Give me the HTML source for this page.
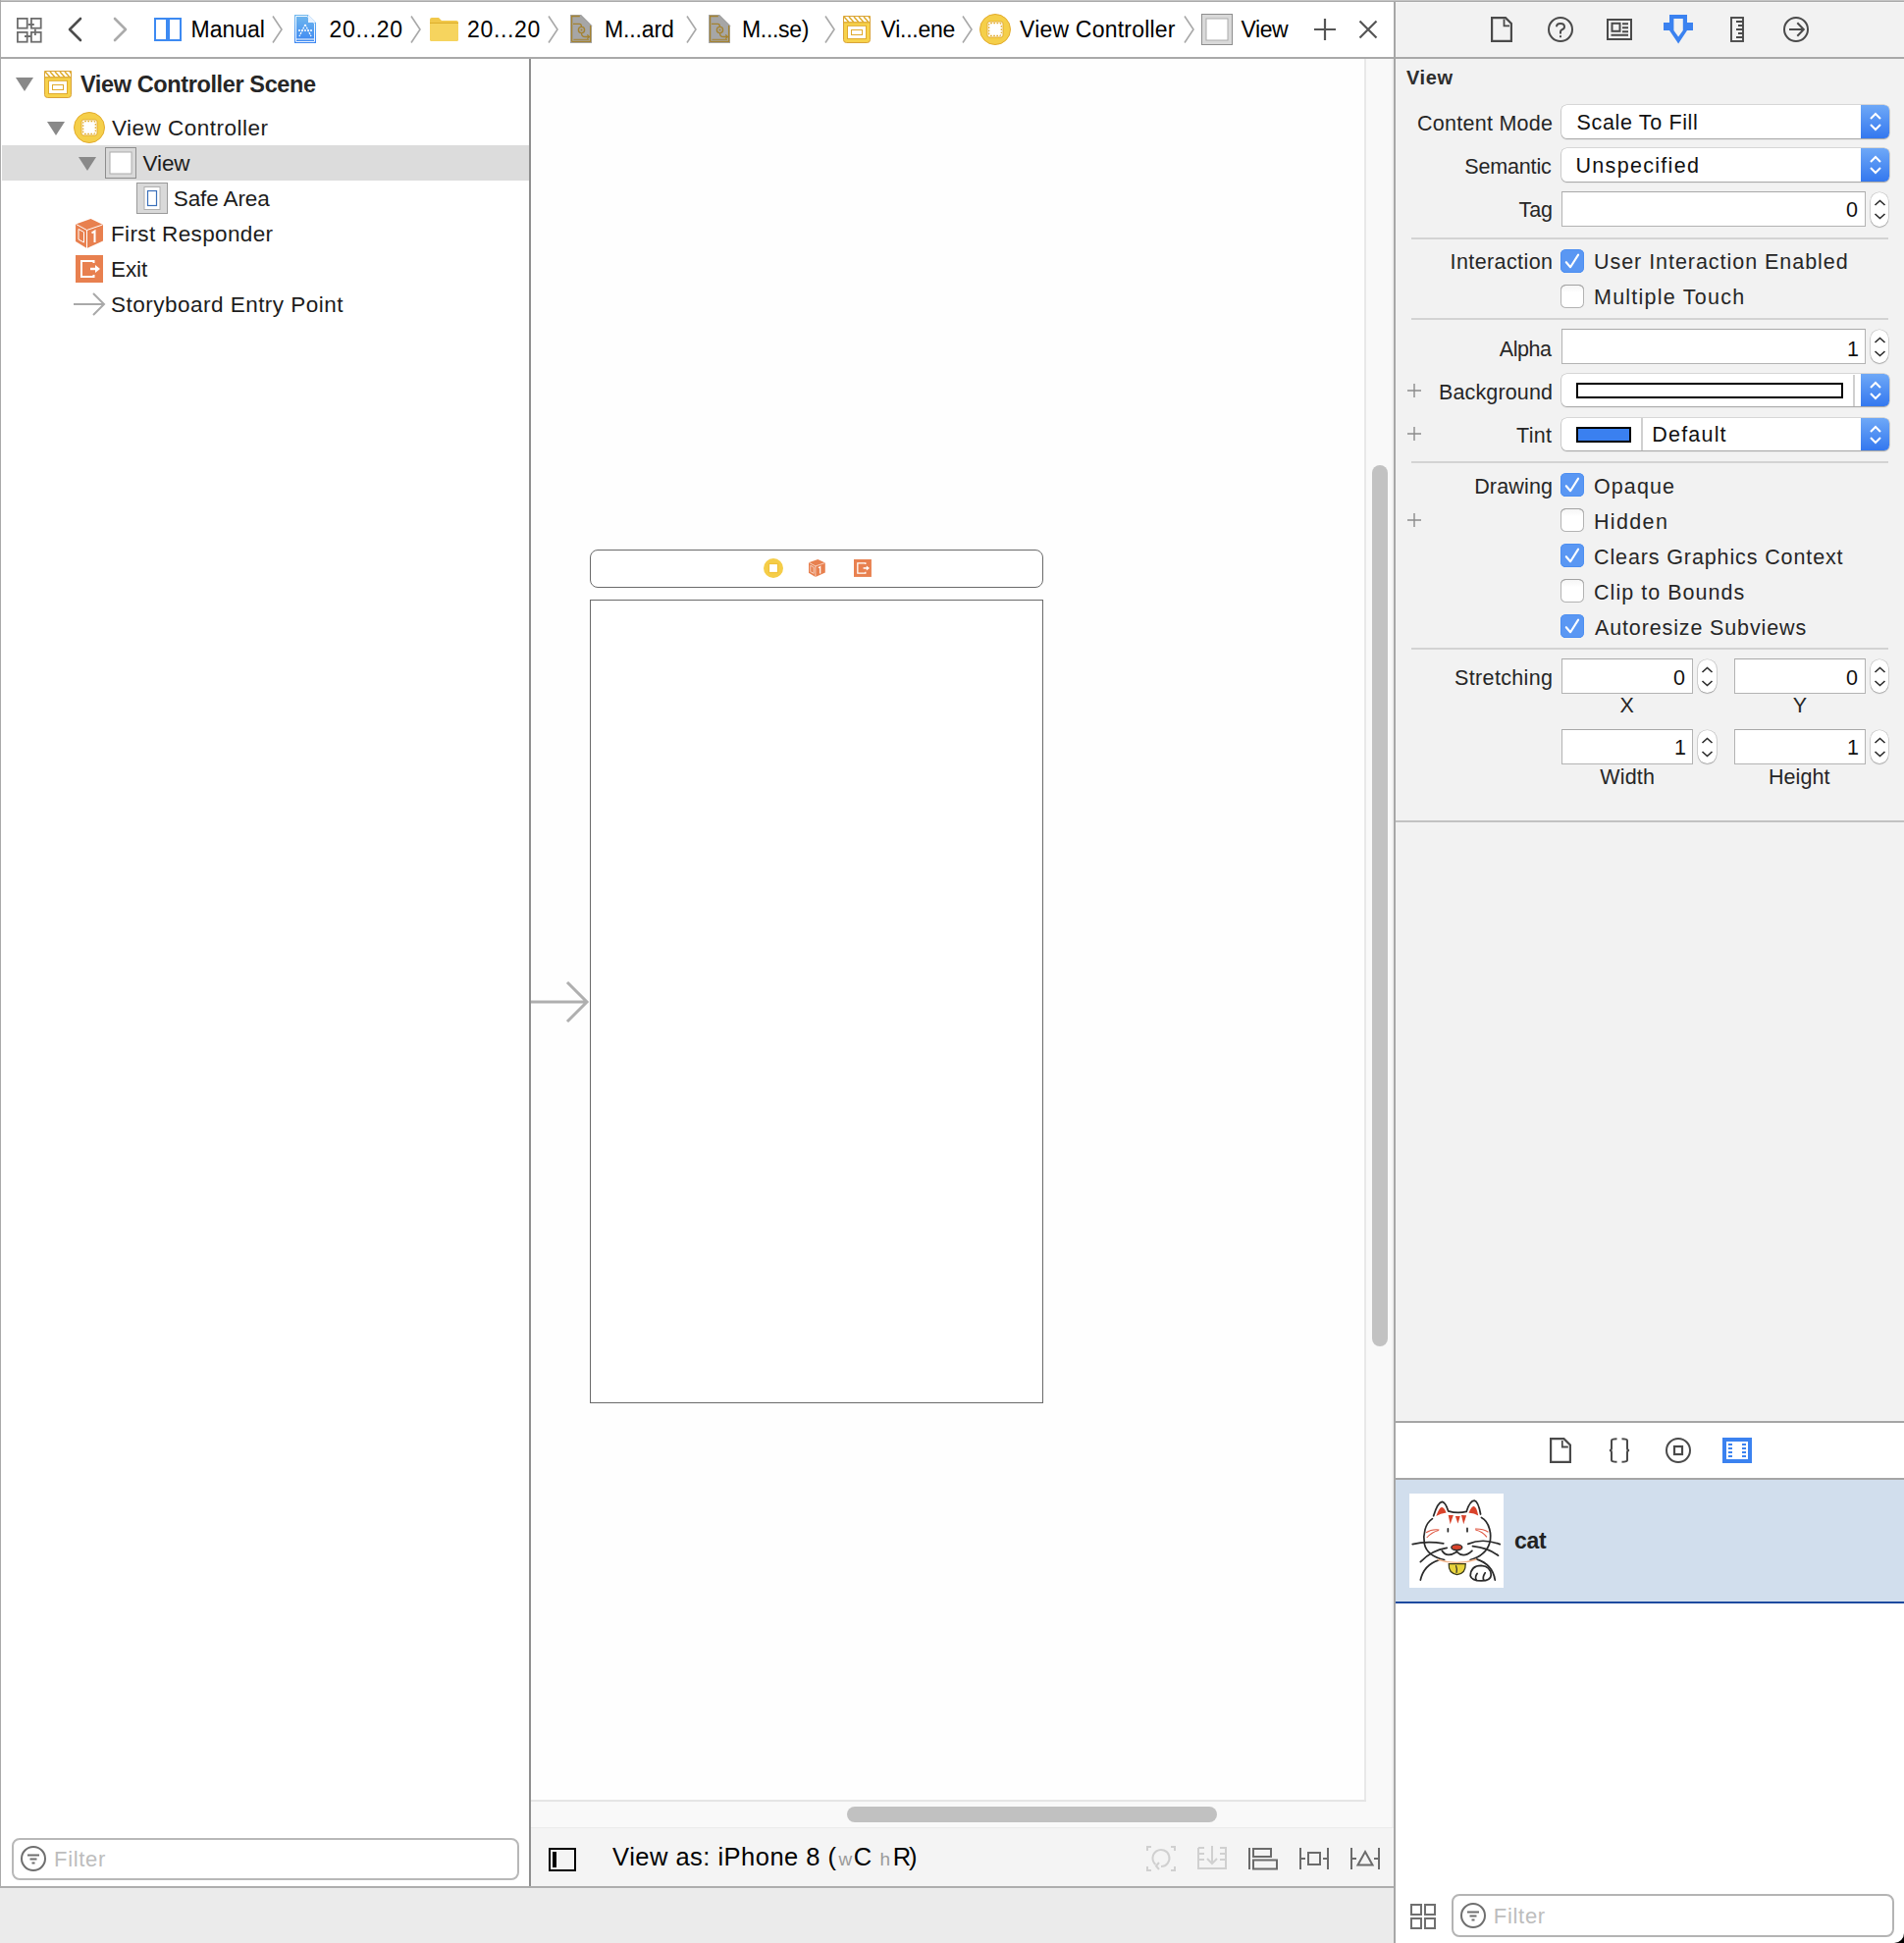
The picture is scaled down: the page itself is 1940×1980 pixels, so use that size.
<!DOCTYPE html>
<html><head><meta charset="utf-8">
<style>
*{box-sizing:border-box;margin:0;padding:0}
html,body{width:1940px;height:1980px;overflow:hidden;background:#ebebeb;font-family:"Liberation Sans",sans-serif;color:#1a1a1a;position:relative}
.a{position:absolute}
.t{position:absolute;white-space:nowrap;line-height:1}
svg{position:absolute;overflow:visible}
</style></head><body>
<div class="a" style="left:0px;top:0px;width:1940px;height:1980px;background:#ebebeb"></div>
<div class="a" style="left:0px;top:0px;width:1420px;height:58px;background:#fff"></div>
<div class="a" style="left:0px;top:60px;width:539px;height:1862px;background:#fff"></div>
<div class="a" style="left:541px;top:60px;width:849px;height:1774px;background:#fefefe"></div>
<div class="a" style="left:1390px;top:60px;width:30px;height:1802px;background:#f9f9f9"></div>
<div class="a" style="left:1390px;top:60px;width:2px;height:1776px;background:#e8e8e8"></div>
<div class="a" style="left:1418px;top:60px;width:1.5px;height:1802px;background:#f0f0f0"></div>
<div class="a" style="left:541px;top:1835px;width:849px;height:27px;background:#f9f9f9"></div>
<div class="a" style="left:541px;top:1834px;width:851px;height:1.5px;background:#e5e5e5"></div>
<div class="a" style="left:541px;top:1862px;width:879px;height:60px;background:#f4f4f4;border-top:1.5px solid #ebebeb"></div>
<div class="a" style="left:1422px;top:0px;width:518px;height:1448px;background:#f2f2f2"></div>
<div class="a" style="left:1422px;top:2px;width:518px;height:1px;background:#f6f6f6"></div>
<div class="a" style="left:1422px;top:1450px;width:518px;height:56px;background:#fff"></div>
<div class="a" style="left:1422px;top:1508px;width:518px;height:472px;background:#fff"></div>
<div class="a" style="left:0px;top:0px;width:1940px;height:1px;background:#c4c4c4"></div>
<div class="a" style="left:0px;top:1px;width:1940px;height:1px;background:#aaaaaa"></div>
<div class="a" style="left:0px;top:58px;width:1940px;height:2px;background:#a9a9a9"></div>
<div class="a" style="left:0px;top:0px;width:1px;height:1924px;background:#aaaaaa"></div>
<div class="a" style="left:539px;top:60px;width:2px;height:1862px;background:#8f8f8f"></div>
<div class="a" style="left:0px;top:1922px;width:1422px;height:2px;background:#adadad"></div>
<div class="a" style="left:1420px;top:2px;width:2px;height:1978px;background:#a7a7a7"></div>
<div class="a" style="left:1422px;top:1448px;width:518px;height:2px;background:#a5a5a5"></div>
<div class="a" style="left:1422px;top:1506px;width:518px;height:2px;background:#a5a5a5"></div>
<svg style="left:17px;top:18px;" width="26" height="26" viewBox="0 0 26 26"><g fill="none" stroke="#6e6e6e" stroke-width="1.8">
<rect x="0.9" y="0.9" width="9.8" height="9.8"/><rect x="14.9" y="0.9" width="9.8" height="9.8"/>
<rect x="0.9" y="14.9" width="9.8" height="9.8"/><rect x="14.9" y="14.9" width="9.8" height="9.8"/>
<path d="M11.6 7H17.8M18.9 11.6V17.9M8 19H14.1"/></g></svg>
<svg style="left:68px;top:17px;" width="18" height="26" viewBox="0 0 18 26"><path d="M14 2L3 13L14 24" fill="none" stroke="#4d4d4d" stroke-width="2.6" stroke-linecap="round" stroke-linejoin="round"/></svg>
<svg style="left:114px;top:17px;" width="18" height="26" viewBox="0 0 18 26"><path d="M3 2L14 13L3 24" fill="none" stroke="#ababab" stroke-width="2.6" stroke-linecap="round" stroke-linejoin="round"/></svg>
<svg style="left:157px;top:18px;" width="28" height="24" viewBox="0 0 28 24"><g fill="none" stroke="#3d8af2" stroke-width="2"><rect x="1" y="1" width="26" height="22"/><path d="M14 1v22" stroke-width="4"/></g></svg>
<svg style="left:277px;top:16px;" width="11" height="28" viewBox="0 0 11 28"><path d="M1 0.5L10 14L1 27.5" fill="none" stroke="#a8a8a8" stroke-width="1.6"/></svg>
<svg style="left:417.5px;top:16px;" width="11" height="28" viewBox="0 0 11 28"><path d="M1 0.5L10 14L1 27.5" fill="none" stroke="#a8a8a8" stroke-width="1.6"/></svg>
<svg style="left:558px;top:16px;" width="11" height="28" viewBox="0 0 11 28"><path d="M1 0.5L10 14L1 27.5" fill="none" stroke="#a8a8a8" stroke-width="1.6"/></svg>
<svg style="left:699px;top:16px;" width="11" height="28" viewBox="0 0 11 28"><path d="M1 0.5L10 14L1 27.5" fill="none" stroke="#a8a8a8" stroke-width="1.6"/></svg>
<svg style="left:839.5px;top:16px;" width="11" height="28" viewBox="0 0 11 28"><path d="M1 0.5L10 14L1 27.5" fill="none" stroke="#a8a8a8" stroke-width="1.6"/></svg>
<svg style="left:980px;top:16px;" width="11" height="28" viewBox="0 0 11 28"><path d="M1 0.5L10 14L1 27.5" fill="none" stroke="#a8a8a8" stroke-width="1.6"/></svg>
<svg style="left:1205.5px;top:16px;" width="11" height="28" viewBox="0 0 11 28"><path d="M1 0.5L10 14L1 27.5" fill="none" stroke="#a8a8a8" stroke-width="1.6"/></svg>
<svg style="left:300px;top:15px;" width="22" height="29" viewBox="0 0 22 29"><defs><linearGradient id="ag" x1="0" y1="0" x2="0" y2="1"><stop offset="0" stop-color="#72b9ee"/><stop offset="1" stop-color="#3b86f2"/></linearGradient></defs>
<path d="M0 0H14L22 8V29H0Z" fill="url(#ag)"/>
<path d="M1.5 1.5H13L20.5 9V27.5H1.5Z" fill="none" stroke="#fff" stroke-width="1" opacity=".9"/>
<path d="M14 0V8H22" fill="#e8f2ff"/>
<path d="M2 25h18" stroke="#fff" stroke-width="1"/>
<g stroke="#fff" stroke-width="1.3" fill="none" stroke-dasharray="2 1"><path d="M11 10L5 22M11 10L17 22M4 16h14"/></g></svg>
<svg style="left:437px;top:18px;" width="30" height="24" viewBox="0 0 30 24"><path d="M1 2Q1 0 3 0H10L13 3H28Q30 3 30 5V22Q30 24 28 24H3Q1 24 1 22Z" fill="#f1c84a"/>
<path d="M1 6H30V22Q30 24 28 24H3Q1 24 1 22Z" fill="#f6d45e"/><path d="M1 5.5H30" stroke="#dcae2c" stroke-width="1"/></svg>
<svg style="left:581px;top:15px;" width="22" height="29" viewBox="0 0 22 29"><path d="M0 0H10.5L22 11.5V29H0Z" fill="#a6a6a6"/>
<path d="M10.5 0L22 11.5" stroke="#8c8c8c" stroke-width="1"/>
<g fill="none" stroke="#a48230" stroke-width="1.3"><path d="M1.6 27.4V1.5H9.8M20.6 11V27.4H1.6"/><path d="M3.4 25.3H19" stroke-width="1"/>
<path d="M3 9.4H9.2Q11.5 9.4 11.5 12.2"/><circle cx="11.5" cy="15.5" r="3.1" stroke-width="1.4"/>
<path d="M11.5 18.7Q11.5 22.5 15 22.5H19.3M17.3 20.4L19.5 22.5L17.3 24.6"/></g>
<circle cx="11.5" cy="15.5" r="1" fill="#a48230"/></svg>
<svg style="left:722px;top:15px;" width="22" height="29" viewBox="0 0 22 29"><path d="M0 0H10.5L22 11.5V29H0Z" fill="#a6a6a6"/>
<path d="M10.5 0L22 11.5" stroke="#8c8c8c" stroke-width="1"/>
<g fill="none" stroke="#a48230" stroke-width="1.3"><path d="M1.6 27.4V1.5H9.8M20.6 11V27.4H1.6"/><path d="M3.4 25.3H19" stroke-width="1"/>
<path d="M3 9.4H9.2Q11.5 9.4 11.5 12.2"/><circle cx="11.5" cy="15.5" r="3.1" stroke-width="1.4"/>
<path d="M11.5 18.7Q11.5 22.5 15 22.5H19.3M17.3 20.4L19.5 22.5L17.3 24.6"/></g>
<circle cx="11.5" cy="15.5" r="1" fill="#a48230"/></svg>
<svg style="left:859px;top:16px;" width="28" height="28" viewBox="0 0 28 28"><path d="M0.5 0.5H27.5V24.5Q27.5 27.5 24.5 27.5H3.5Q0.5 27.5 0.5 24.5Z" fill="#f7d24b" stroke="#d9a33a" stroke-width="1"/>
<rect x="1" y="1" width="26" height="5.6" fill="#fff"/>
<path d="M1 1L5.8 6.6M6 1L10.8 6.6M11 1L15.8 6.6M16 1L20.8 6.6M21 1L25.8 6.6M26 1L27.2 2.4" stroke="#e0ad2c" stroke-width="1.5"/>
<path d="M0.5 6.8H27.5" stroke="#dba52c" stroke-width="1.2"/>
<rect x="4.5" y="10.3" width="19" height="13.2" fill="#fff" stroke="#e0aa2e" stroke-width="1"/>
<rect x="8.5" y="14.5" width="11" height="5" fill="none" stroke="#e0aa2e" stroke-width="1"/></svg>
<svg style="left:998px;top:14px;" width="32" height="32" viewBox="0 0 32 32"><g transform="scale(1.0)"><circle cx="16" cy="16" r="15.5" fill="#f5cf4a" stroke="#e3ac2e" stroke-width="1"/>
<rect x="8" y="8" width="16" height="16" rx="2" fill="#fff" stroke="#e3ac2e" stroke-width="1"/>
<rect x="9.7" y="9.7" width="12.6" height="12.6" rx="1.5" fill="none" stroke="#e3ac2e" stroke-width="1.2" stroke-dasharray="1.7 1.45"/></g></svg>
<svg style="left:1224px;top:14px;" width="32" height="32" viewBox="0 0 32 32"><rect x="0.5" y="0.5" width="31" height="31" fill="#d9d9d9" stroke="#8e8e8e" stroke-width="1"/>
<rect x="5" y="5" width="22" height="22" fill="#fff" stroke="#acacac" stroke-width="1"/></svg>
<svg style="left:1338px;top:18px;" width="24" height="24" viewBox="0 0 24 24"><path d="M12 1V23M1 12H23" stroke="#555" stroke-width="2.2"/></svg>
<svg style="left:1384px;top:20px;" width="20" height="20" viewBox="0 0 20 20"><path d="M1.5 1.5L18.5 18.5M18.5 1.5L1.5 18.5" stroke="#555" stroke-width="2.2"/></svg>
<div class="t" id="t0" style="left:194.50px;top:19px;font-size:23px;font-weight:400;color:#000;letter-spacing:-0.015px;">Manual</div>
<div class="t" id="t1" style="left:335.50px;top:19px;font-size:23px;font-weight:400;color:#000;letter-spacing:0.701px;">20...20</div>
<div class="t" id="t2" style="left:476.00px;top:19px;font-size:23px;font-weight:400;color:#000;letter-spacing:0.659px;">20...20</div>
<div class="t" id="t3" style="left:616.00px;top:19px;font-size:23px;font-weight:400;color:#000;letter-spacing:-0.130px;">M...ard</div>
<div class="t" id="t4" style="left:756.00px;top:19px;font-size:23px;font-weight:400;color:#000;letter-spacing:-0.312px;">M...se)</div>
<div class="t" id="t5" style="left:897.50px;top:19px;font-size:23px;font-weight:400;color:#000;letter-spacing:-0.256px;">Vi...ene</div>
<div class="t" id="t6" style="left:1039.00px;top:19px;font-size:23px;font-weight:400;color:#000;letter-spacing:0.206px;">View Controller</div>
<div class="t" id="t7" style="left:1264.50px;top:19px;font-size:23px;font-weight:400;color:#000;letter-spacing:-0.442px;">View</div>
<div class="a" style="left:2px;top:148px;width:537px;height:36px;background:#dcdcdc"></div>
<svg style="left:16px;top:79px;" width="18" height="14" viewBox="0 0 18 14"><path d="M0 0H18L9 14Z" fill="#898989"/></svg>
<svg style="left:48px;top:123.5px;" width="18" height="14" viewBox="0 0 18 14"><path d="M0 0H18L9 14Z" fill="#898989"/></svg>
<svg style="left:80px;top:159.5px;" width="18" height="14" viewBox="0 0 18 14"><path d="M0 0H18L9 14Z" fill="#898989"/></svg>
<svg style="left:45px;top:72px;" width="28" height="28" viewBox="0 0 28 28"><path d="M0.5 0.5H27.5V24.5Q27.5 27.5 24.5 27.5H3.5Q0.5 27.5 0.5 24.5Z" fill="#f7d24b" stroke="#d9a33a" stroke-width="1"/>
<rect x="1" y="1" width="26" height="5.6" fill="#fff"/>
<path d="M1 1L5.8 6.6M6 1L10.8 6.6M11 1L15.8 6.6M16 1L20.8 6.6M21 1L25.8 6.6M26 1L27.2 2.4" stroke="#e0ad2c" stroke-width="1.5"/>
<path d="M0.5 6.8H27.5" stroke="#dba52c" stroke-width="1.2"/>
<rect x="4.5" y="10.3" width="19" height="13.2" fill="#fff" stroke="#e0aa2e" stroke-width="1"/>
<rect x="8.5" y="14.5" width="11" height="5" fill="none" stroke="#e0aa2e" stroke-width="1"/></svg>
<svg style="left:75px;top:114px;" width="32" height="32" viewBox="0 0 32 32"><g transform="scale(1.0)"><circle cx="16" cy="16" r="15.5" fill="#f5cf4a" stroke="#e3ac2e" stroke-width="1"/>
<rect x="8" y="8" width="16" height="16" rx="2" fill="#fff" stroke="#e3ac2e" stroke-width="1"/>
<rect x="9.7" y="9.7" width="12.6" height="12.6" rx="1.5" fill="none" stroke="#e3ac2e" stroke-width="1.2" stroke-dasharray="1.7 1.45"/></g></svg>
<svg style="left:107px;top:150px;" width="32" height="32" viewBox="0 0 32 32"><rect x="0.5" y="0.5" width="31" height="31" fill="#d9d9d9" stroke="#8e8e8e" stroke-width="1"/>
<rect x="5" y="5" width="22" height="22" fill="#fff" stroke="#acacac" stroke-width="1"/></svg>
<svg style="left:139px;top:186px;" width="32" height="32" viewBox="0 0 32 32"><rect x="0.5" y="0.5" width="31" height="31" fill="#d9d9d9" stroke="#9a9a9a" stroke-width="1"/>
<rect x="8" y="4.5" width="16" height="23" fill="#fff" stroke="#b0b0b0" stroke-width="1"/>
<rect x="11.5" y="8.5" width="9" height="15" fill="none" stroke="#3b70ba" stroke-width="1.2"/></svg>
<svg style="left:77px;top:223px;" width="28.0" height="31.0" viewBox="0 0 28.0 31.0"><g transform="scale(1.0)"><path d="M15.5 0L28 6V22.5L11.5 30L0 23V5.5Z" fill="#e8804f"/>
<path d="M0.5 5.5L11.5 11.5L27.5 6M11.5 11.5V30" fill="none" stroke="#fff" stroke-width="1"/>
<path d="M3 10.5L8.5 13.5V24L3 21Z" fill="none" stroke="#fff" stroke-width="1"/>
<path d="M16.5 14.5L19.5 12.5V24" fill="none" stroke="#fff" stroke-width="2"/></g></svg>
<svg style="left:77px;top:260px;" width="28.0" height="28.0" viewBox="0 0 28.0 28.0"><g transform="scale(1.0)"><rect x="0" y="0" width="28" height="28" fill="#e8804f"/>
<path d="M18.5 8V6H6V22H18.5V20" fill="none" stroke="#fff" stroke-width="2"/>
<path d="M15 14H21" stroke="#fff" stroke-width="2.4"/><path d="M20 10L25 14L20 18Z" fill="#fff"/></g></svg>
<svg style="left:75px;top:298px;" width="32" height="24" viewBox="0 0 32 24"><path d="M0 12H31M20 1L31 12L20 23" fill="none" stroke="#a9a9a9" stroke-width="2"/></svg>
<div class="t" id="t8" style="left:82.00px;top:75px;font-size:23.5px;font-weight:700;color:#262626;letter-spacing:-0.382px;">View Controller Scene</div>
<div class="t" id="t9" style="left:114.00px;top:120px;font-size:22.5px;font-weight:400;color:#1c1c1c;letter-spacing:0.482px;">View Controller</div>
<div class="t" id="t10" style="left:145.50px;top:156px;font-size:22.5px;font-weight:400;color:#1c1c1c;letter-spacing:-0.104px;">View</div>
<div class="t" id="t11" style="left:176.80px;top:192px;font-size:22.5px;font-weight:400;color:#1c1c1c;letter-spacing:-0.106px;">Safe Area</div>
<div class="t" id="t12" style="left:113.00px;top:228px;font-size:22.5px;font-weight:400;color:#1c1c1c;letter-spacing:0.352px;">First Responder</div>
<div class="t" id="t13" style="left:113.00px;top:264px;font-size:22.5px;font-weight:400;color:#1c1c1c;letter-spacing:-0.119px;">Exit</div>
<div class="t" id="t14" style="left:113.00px;top:300px;font-size:22.5px;font-weight:400;color:#1c1c1c;letter-spacing:0.485px;">Storyboard Entry Point</div>
<div class="a" style="left:11.5px;top:1872.5px;width:517px;height:43px;background:#fff;border:2px solid #b8b8b8;border-radius:8px"></div>
<svg style="left:21px;top:1871px;top:1881px" width="26" height="26" viewBox="0 0 26 26"><circle cx="13" cy="13" r="12" fill="none" stroke="#6f6f6f" stroke-width="2"/><path d="M7 9.5H19M9.5 13.5H16.5M11.5 17.5H14.5" stroke="#6f6f6f" stroke-width="2"/></svg>
<div class="t" id="t15" style="left:55.00px;top:1884px;font-size:22px;font-weight:400;color:#bdbdbd;letter-spacing:0.688px;">Filter</div>
<div class="a" style="left:601px;top:560px;width:462px;height:39px;background:#fff;border:1.5px solid #6a6a6a;border-radius:8px"></div>
<div class="a" style="left:601px;top:611px;width:462px;height:819px;background:#fff;border:1px solid #6a6a6a"></div>
<svg style="left:778px;top:569px;" width="20" height="20" viewBox="0 0 20 20"><circle cx="10" cy="10" r="10" fill="#f5cd48"/><rect x="5.5" y="5.5" width="9" height="9" fill="#fff" stroke="#f0c23a" stroke-width="1.2"/></svg>
<svg style="left:824px;top:570px;" width="16.8" height="18.599999999999998" viewBox="0 0 16.8 18.599999999999998"><g transform="scale(0.6)"><path d="M15.5 0L28 6V22.5L11.5 30L0 23V5.5Z" fill="#e8804f"/>
<path d="M0.5 5.5L11.5 11.5L27.5 6M11.5 11.5V30" fill="none" stroke="#fff" stroke-width="1"/>
<path d="M3 10.5L8.5 13.5V24L3 21Z" fill="none" stroke="#fff" stroke-width="1"/>
<path d="M16.5 14.5L19.5 12.5V24" fill="none" stroke="#fff" stroke-width="2"/></g></svg>
<svg style="left:869.5px;top:570px;" width="17.92" height="17.92" viewBox="0 0 17.92 17.92"><g transform="scale(0.64)"><rect x="0" y="0" width="28" height="28" fill="#e8804f"/>
<path d="M18.5 8V6H6V22H18.5V20" fill="none" stroke="#fff" stroke-width="2"/>
<path d="M15 14H21" stroke="#fff" stroke-width="2.4"/><path d="M20 10L25 14L20 18Z" fill="#fff"/></g></svg>
<svg style="left:541px;top:999px;" width="60" height="44" viewBox="0 0 60 44"><path d="M0 22H57M37 2L57 22L37 42" fill="none" stroke="#afafaf" stroke-width="3"/></svg>
<div class="a" style="left:1398px;top:474px;width:16px;height:898px;background:#c2c2c2;border-radius:8px"></div>
<div class="a" style="left:863px;top:1841px;width:377px;height:16px;background:#c1c1c1;border-radius:8px"></div>
<svg style="left:559px;top:1883px;" width="28" height="24" viewBox="0 0 28 24"><rect x="1" y="1" width="26" height="22" fill="none" stroke="#000" stroke-width="2"/><rect x="4" y="4" width="4" height="16" fill="#000"/></svg>
<div class="t" id="t16" style="left:624.10px;top:1880px;font-size:25.5px;font-weight:400;color:#000;letter-spacing:0.486px;">View as: iPhone 8 (</div>
<div class="t" id="t17" style="left:854.40px;top:1885px;font-size:19px;font-weight:400;color:#9a9a9a;">w</div>
<div class="t" id="t18" style="left:869.70px;top:1880px;font-size:25.5px;font-weight:400;color:#000;">C</div>
<div class="t" id="t19" style="left:896.50px;top:1885px;font-size:19px;font-weight:400;color:#9a9a9a;">h</div>
<div class="t" id="t20" style="left:909.70px;top:1880px;font-size:25.5px;font-weight:400;color:#000;">R</div>
<div class="t" id="t21" style="left:925.90px;top:1880px;font-size:25.5px;font-weight:400;color:#000;">)</div>
<svg style="left:1168px;top:1881px;" width="30" height="26" viewBox="0 0 30 26"><g fill="none" stroke="#d0d0d0" stroke-width="2"><path d="M1 5V1H5M25 1H29V5M29 21V25H25M5 25H1V21"/>
<path d="M9.5 19A8.5 8.5 0 1 1 15 21"/><path d="M13 17L10 20.5L13 24"/></g></svg>
<svg style="left:1220px;top:1881px;" width="30" height="26" viewBox="0 0 30 26"><g fill="none" stroke="#d0d0d0" stroke-width="2"><path d="M1 2V23H29V2H23M1 2H7M1 8H7M23 8H29M1 14H7M23 14H29"/>
<path d="M15 0V18M10 13L15 18L20 13"/></g></svg>
<svg style="left:1272px;top:1881px;" width="30" height="26" viewBox="0 0 30 26"><g fill="none" stroke="#6b6b6b" stroke-width="2"><path d="M1 2V24"/><rect x="5" y="3" width="18" height="8"/><rect x="5" y="14.5" width="24" height="9"/></g></svg>
<svg style="left:1324px;top:1881px;" width="30" height="26" viewBox="0 0 30 26"><g fill="none" stroke="#6b6b6b" stroke-width="2"><path d="M1 2V24M29 2V24M2 13H6M24 13H28"/><rect x="9" y="7" width="12" height="12"/></g></svg>
<svg style="left:1376px;top:1881px;" width="30" height="26" viewBox="0 0 30 26"><g fill="none" stroke="#6b6b6b" stroke-width="2"><path d="M1 2V24M29 2V24M2 13H6M24 13H28"/><path d="M15 6L22.5 19.5H7.5Z"/></g></svg>
<svg style="left:1519px;top:17px;" width="22" height="26" viewBox="0 0 22 26"><path d="M1.1 1.1H15L20.9 7V24.9H1.1Z" fill="none" stroke="#4a4a4a" stroke-width="2.2"/><path d="M13.5 2.5V9.3H19" fill="none" stroke="#4a4a4a" stroke-width="1.8"/></svg>
<svg style="left:1577px;top:17px;" width="26" height="26" viewBox="0 0 26 26"><circle cx="13" cy="13" r="12" fill="none" stroke="#4a4a4a" stroke-width="2"/><path d="M9 10.3Q9 7 13 7Q17 7 17 10.3Q17 12.5 14.5 13.3Q13 13.8 13 15.5V17.5" fill="none" stroke="#4a4a4a" stroke-width="2"/><rect x="12" y="19.2" width="2" height="2" fill="#4a4a4a"/></svg>
<svg style="left:1637px;top:19px;" width="26" height="22" viewBox="0 0 26 22"><rect x="1" y="1" width="24" height="20" fill="none" stroke="#4a4a4a" stroke-width="2"/><rect x="5.5" y="4.8" width="8" height="8" fill="none" stroke="#4a4a4a" stroke-width="2"/><path d="M16 5.2H22M16 9.2H22M16 13.2H22M4.5 16.7H22" stroke="#4a4a4a" stroke-width="2"/></svg>
<svg style="left:1695px;top:15px;" width="30" height="30" viewBox="0 0 30 30"><path fill-rule="evenodd" fill="#3b82f0" d="M6 0H24V7.9H30V16H24L15.1 29.5L6 16H0V7.9H6ZM10.4 4.1H19.8V16.1L15.1 22.6L10.4 16.1Z"/></svg>
<svg style="left:1763px;top:17px;" width="14" height="26" viewBox="0 0 14 26"><rect x="1" y="1" width="12" height="24" fill="none" stroke="#4a4a4a" stroke-width="1.9"/><path d="M6 5H13M8 9H13M6 13H13M8 17H13M6 21H13" stroke="#4a4a4a" stroke-width="1.9"/></svg>
<svg style="left:1817px;top:17px;" width="26" height="26" viewBox="0 0 26 26"><circle cx="13" cy="13" r="12" fill="none" stroke="#4a4a4a" stroke-width="2"/><path d="M6 13H20.5M14.3 6.3L20.8 13L14.3 19.7" fill="none" stroke="#4a4a4a" stroke-width="2"/></svg>
<div class="t" id="t22" style="left:1433.00px;top:69px;font-size:20px;font-weight:700;color:#2e2e2e;letter-spacing:0.614px;">View</div>
<div class="t" id="t23" style="left:1444.00px;top:116px;font-size:21.5px;font-weight:400;color:#262626;letter-spacing:0.264px;">Content Mode</div>
<div class="a" style="left:1591.3px;top:107.2px;width:333.7px;height:33.5px;background:#fff;border-radius:5.5px;box-shadow:0 0 0 0.6px rgba(0,0,0,.22),0 1px 1.2px rgba(0,0,0,.25)"></div>
<div class="a" style="left:1896px;top:107.2px;width:29px;height:33.5px;background:linear-gradient(#6ea8f7,#3478ef);border-radius:0 5.5px 5.5px 0"></div>
<svg style="left:1903.5px;top:113.2px;" width="14" height="22" viewBox="0 0 14 22"><path d="M2 8L7 3L12 8M2 14L7 19L12 14" fill="none" stroke="#fff" stroke-width="2"/></svg>
<div class="t" id="t24" style="left:1606.50px;top:115px;font-size:21.5px;font-weight:400;color:#111;letter-spacing:0.648px;">Scale To Fill</div>
<div class="t" id="t25" style="left:1492.30px;top:160px;font-size:21.5px;font-weight:400;color:#262626;letter-spacing:-0.167px;">Semantic</div>
<div class="a" style="left:1591.3px;top:151px;width:333.7px;height:33.5px;background:#fff;border-radius:5.5px;box-shadow:0 0 0 0.6px rgba(0,0,0,.22),0 1px 1.2px rgba(0,0,0,.25)"></div>
<div class="a" style="left:1896px;top:151px;width:29px;height:33.5px;background:linear-gradient(#6ea8f7,#3478ef);border-radius:0 5.5px 5.5px 0"></div>
<svg style="left:1903.5px;top:157px;" width="14" height="22" viewBox="0 0 14 22"><path d="M2 8L7 3L12 8M2 14L7 19L12 14" fill="none" stroke="#fff" stroke-width="2"/></svg>
<div class="t" id="t26" style="left:1605.50px;top:159px;font-size:21.5px;font-weight:400;color:#111;letter-spacing:1.302px;">Unspecified</div>
<div class="t" id="t27" style="left:1547.60px;top:204px;font-size:21.5px;font-weight:400;color:#262626;letter-spacing:-0.154px;">Tag</div>
<div class="a" style="left:1591px;top:195.2px;width:310px;height:35.5px;background:#fff;border:1px solid #b3b3b3;border-top-color:#a8a8a8"></div>
<div class="a" style="left:1905.5px;top:196px;width:18.5px;height:34.5px;background:#fff;border-radius:9.5px;box-shadow:0 0 0 0.6px rgba(0,0,0,.2),0 1px 1.2px rgba(0,0,0,.22)"></div>
<svg style="left:1908.5px;top:203px;" width="13" height="21" viewBox="0 0 13 21"><path d="M1.5 6L6.5 1.5L11.5 6M1.5 15L6.5 19.5L11.5 15" fill="none" stroke="#2a2a2a" stroke-width="1.6"/></svg>
<div class="t" id="t28" style="left:1881.00px;top:204px;font-size:21.5px;font-weight:400;color:#111;">0</div>
<div class="a" style="left:1438px;top:242px;width:486px;height:2px;background:#d3d3d3"></div>
<div class="t" id="t29" style="left:1477.60px;top:257px;font-size:21.5px;font-weight:400;color:#262626;letter-spacing:0.396px;">Interaction</div>
<div class="a" style="left:1590px;top:254px;width:24px;height:24px;background:#5a97f3;border-radius:5.5px;box-shadow:inset 0 0 0 0.5px #3f86f0"></div>
<svg style="left:1590px;top:254px;" width="24" height="24" viewBox="0 0 24 24"><path d="M5.8 13.2L10.1 18.2L18.1 5.6" fill="none" stroke="#fff" stroke-width="2.1" stroke-linecap="round" stroke-linejoin="round"/></svg>
<div class="t" id="t30" style="left:1624.00px;top:257px;font-size:21.5px;font-weight:400;color:#262626;letter-spacing:0.957px;">User Interaction Enabled</div>
<div class="a" style="left:1590px;top:290px;width:24px;height:24px;background:linear-gradient(#f4f4f4,#fff 35%);border-radius:5.5px;box-shadow:inset 0 1px 0 #a2a2a2,inset 0 0 0 1px #b3b3b3"></div>
<div class="t" id="t31" style="left:1624.00px;top:293px;font-size:21.5px;font-weight:400;color:#262626;letter-spacing:1.241px;">Multiple Touch</div>
<div class="a" style="left:1438px;top:324px;width:486px;height:2px;background:#d3d3d3"></div>
<div class="t" id="t32" style="left:1527.80px;top:346px;font-size:21.5px;font-weight:400;color:#262626;letter-spacing:-0.458px;">Alpha</div>
<div class="a" style="left:1591px;top:335px;width:310px;height:35.5px;background:#fff;border:1px solid #b3b3b3;border-top-color:#a8a8a8"></div>
<div class="a" style="left:1905.5px;top:335.5px;width:18.5px;height:34.5px;background:#fff;border-radius:9.5px;box-shadow:0 0 0 0.6px rgba(0,0,0,.2),0 1px 1.2px rgba(0,0,0,.22)"></div>
<svg style="left:1908.5px;top:342.5px;" width="13" height="21" viewBox="0 0 13 21"><path d="M1.5 6L6.5 1.5L11.5 6M1.5 15L6.5 19.5L11.5 15" fill="none" stroke="#2a2a2a" stroke-width="1.6"/></svg>
<div class="t" id="t33" style="left:1882.00px;top:346px;font-size:21.5px;font-weight:400;color:#111;">1</div>
<svg style="left:1434px;top:391px;" width="14" height="14" viewBox="0 0 14 14"><path d="M7 0V14M0 7H14" stroke="#8c8c8c" stroke-width="1.4"/></svg>
<div class="t" id="t34" style="left:1465.90px;top:390px;font-size:21.5px;font-weight:400;color:#262626;letter-spacing:0.146px;">Background</div>
<div class="a" style="left:1591.3px;top:381.4px;width:333.7px;height:33px;background:#fff;border-radius:5.5px;box-shadow:0 0 0 0.6px rgba(0,0,0,.22),0 1px 1.2px rgba(0,0,0,.25)"></div>
<div class="a" style="left:1896px;top:381.4px;width:29px;height:33px;background:linear-gradient(#6ea8f7,#3478ef);border-radius:0 5.5px 5.5px 0"></div>
<svg style="left:1903.5px;top:387.4px;" width="14" height="22" viewBox="0 0 14 22"><path d="M2 8L7 3L12 8M2 14L7 19L12 14" fill="none" stroke="#fff" stroke-width="2"/></svg>
<div class="a" style="left:1606px;top:390px;width:272px;height:16px;background:#fff;border:2px solid #000"></div>
<div class="a" style="left:1888px;top:382px;width:1.5px;height:32px;background:#d0d0d0"></div>
<svg style="left:1434px;top:434.5px;" width="14" height="14" viewBox="0 0 14 14"><path d="M7 0V14M0 7H14" stroke="#8c8c8c" stroke-width="1.4"/></svg>
<div class="t" id="t35" style="left:1545.00px;top:434px;font-size:21.5px;font-weight:400;color:#262626;letter-spacing:0.310px;">Tint</div>
<div class="a" style="left:1591.3px;top:425.5px;width:333.7px;height:33.5px;background:#fff;border-radius:5.5px;box-shadow:0 0 0 0.6px rgba(0,0,0,.22),0 1px 1.2px rgba(0,0,0,.25)"></div>
<div class="a" style="left:1896px;top:425.5px;width:29px;height:33.5px;background:linear-gradient(#6ea8f7,#3478ef);border-radius:0 5.5px 5.5px 0"></div>
<svg style="left:1903.5px;top:431.5px;" width="14" height="22" viewBox="0 0 14 22"><path d="M2 8L7 3L12 8M2 14L7 19L12 14" fill="none" stroke="#fff" stroke-width="2"/></svg>
<div class="a" style="left:1606px;top:434.5px;width:56px;height:16px;background:#3a80f0;border:2px solid #000"></div>
<div class="a" style="left:1672px;top:426px;width:1.5px;height:33px;background:#d0d0d0"></div>
<div class="t" id="t36" style="left:1683.30px;top:433px;font-size:21.5px;font-weight:400;color:#111;letter-spacing:1.192px;">Default</div>
<div class="a" style="left:1438px;top:470px;width:486px;height:2px;background:#d3d3d3"></div>
<div class="t" id="t37" style="left:1502.20px;top:486px;font-size:21.5px;font-weight:400;color:#262626;letter-spacing:0.149px;">Drawing</div>
<div class="a" style="left:1590px;top:482px;width:24px;height:24px;background:#5a97f3;border-radius:5.5px;box-shadow:inset 0 0 0 0.5px #3f86f0"></div>
<svg style="left:1590px;top:482px;" width="24" height="24" viewBox="0 0 24 24"><path d="M5.8 13.2L10.1 18.2L18.1 5.6" fill="none" stroke="#fff" stroke-width="2.1" stroke-linecap="round" stroke-linejoin="round"/></svg>
<div class="t" id="t38" style="left:1624.00px;top:486px;font-size:21.5px;font-weight:400;color:#262626;letter-spacing:1.090px;">Opaque</div>
<svg style="left:1434px;top:523px;" width="14" height="14" viewBox="0 0 14 14"><path d="M7 0V14M0 7H14" stroke="#8c8c8c" stroke-width="1.4"/></svg>
<div class="a" style="left:1590px;top:518px;width:24px;height:24px;background:linear-gradient(#f4f4f4,#fff 35%);border-radius:5.5px;box-shadow:inset 0 1px 0 #a2a2a2,inset 0 0 0 1px #b3b3b3"></div>
<div class="t" id="t39" style="left:1624.00px;top:522px;font-size:21.5px;font-weight:400;color:#262626;letter-spacing:1.345px;">Hidden</div>
<div class="a" style="left:1590px;top:554px;width:24px;height:24px;background:#5a97f3;border-radius:5.5px;box-shadow:inset 0 0 0 0.5px #3f86f0"></div>
<svg style="left:1590px;top:554px;" width="24" height="24" viewBox="0 0 24 24"><path d="M5.8 13.2L10.1 18.2L18.1 5.6" fill="none" stroke="#fff" stroke-width="2.1" stroke-linecap="round" stroke-linejoin="round"/></svg>
<div class="t" id="t40" style="left:1624.00px;top:558px;font-size:21.5px;font-weight:400;color:#262626;letter-spacing:0.881px;">Clears Graphics Context</div>
<div class="a" style="left:1590px;top:590px;width:24px;height:24px;background:linear-gradient(#f4f4f4,#fff 35%);border-radius:5.5px;box-shadow:inset 0 1px 0 #a2a2a2,inset 0 0 0 1px #b3b3b3"></div>
<div class="t" id="t41" style="left:1624.00px;top:594px;font-size:21.5px;font-weight:400;color:#262626;letter-spacing:1.040px;">Clip to Bounds</div>
<div class="a" style="left:1590px;top:626px;width:24px;height:24px;background:#5a97f3;border-radius:5.5px;box-shadow:inset 0 0 0 0.5px #3f86f0"></div>
<svg style="left:1590px;top:626px;" width="24" height="24" viewBox="0 0 24 24"><path d="M5.8 13.2L10.1 18.2L18.1 5.6" fill="none" stroke="#fff" stroke-width="2.1" stroke-linecap="round" stroke-linejoin="round"/></svg>
<div class="t" id="t42" style="left:1625.00px;top:630px;font-size:21.5px;font-weight:400;color:#262626;letter-spacing:0.866px;">Autoresize Subviews</div>
<div class="a" style="left:1438px;top:660px;width:486px;height:2px;background:#d3d3d3"></div>
<div class="t" id="t43" style="left:1482.10px;top:681px;font-size:21.5px;font-weight:400;color:#262626;letter-spacing:0.339px;">Stretching</div>
<div class="a" style="left:1591px;top:671.3px;width:133.5px;height:35.5px;background:#fff;border:1px solid #b3b3b3;border-top-color:#a8a8a8"></div>
<div class="a" style="left:1730px;top:671.8px;width:18.5px;height:34.5px;background:#fff;border-radius:9.5px;box-shadow:0 0 0 0.6px rgba(0,0,0,.2),0 1px 1.2px rgba(0,0,0,.22)"></div>
<svg style="left:1733px;top:678.8px;" width="13" height="21" viewBox="0 0 13 21"><path d="M1.5 6L6.5 1.5L11.5 6M1.5 15L6.5 19.5L11.5 15" fill="none" stroke="#2a2a2a" stroke-width="1.6"/></svg>
<div class="a" style="left:1767.3px;top:671.3px;width:133.5px;height:35.5px;background:#fff;border:1px solid #b3b3b3;border-top-color:#a8a8a8"></div>
<div class="a" style="left:1905.5px;top:671.8px;width:18.5px;height:34.5px;background:#fff;border-radius:9.5px;box-shadow:0 0 0 0.6px rgba(0,0,0,.2),0 1px 1.2px rgba(0,0,0,.22)"></div>
<svg style="left:1908.5px;top:678.8px;" width="13" height="21" viewBox="0 0 13 21"><path d="M1.5 6L6.5 1.5L11.5 6M1.5 15L6.5 19.5L11.5 15" fill="none" stroke="#2a2a2a" stroke-width="1.6"/></svg>
<div class="t" id="t44" style="left:1705.00px;top:681px;font-size:21.5px;font-weight:400;color:#111;">0</div>
<div class="t" id="t45" style="left:1881.00px;top:681px;font-size:21.5px;font-weight:400;color:#111;">0</div>
<div class="t" id="t46" style="left:1650.60px;top:709px;font-size:21.5px;font-weight:400;color:#262626;">X</div>
<div class="t" id="t47" style="left:1826.70px;top:709px;font-size:21.5px;font-weight:400;color:#262626;">Y</div>
<div class="a" style="left:1591px;top:743.4px;width:133.5px;height:35.5px;background:#fff;border:1px solid #b3b3b3;border-top-color:#a8a8a8"></div>
<div class="a" style="left:1730px;top:743.9px;width:18.5px;height:34.5px;background:#fff;border-radius:9.5px;box-shadow:0 0 0 0.6px rgba(0,0,0,.2),0 1px 1.2px rgba(0,0,0,.22)"></div>
<svg style="left:1733px;top:750.9px;" width="13" height="21" viewBox="0 0 13 21"><path d="M1.5 6L6.5 1.5L11.5 6M1.5 15L6.5 19.5L11.5 15" fill="none" stroke="#2a2a2a" stroke-width="1.6"/></svg>
<div class="a" style="left:1767.3px;top:743.4px;width:133.5px;height:35.5px;background:#fff;border:1px solid #b3b3b3;border-top-color:#a8a8a8"></div>
<div class="a" style="left:1905.5px;top:743.9px;width:18.5px;height:34.5px;background:#fff;border-radius:9.5px;box-shadow:0 0 0 0.6px rgba(0,0,0,.2),0 1px 1.2px rgba(0,0,0,.22)"></div>
<svg style="left:1908.5px;top:750.9px;" width="13" height="21" viewBox="0 0 13 21"><path d="M1.5 6L6.5 1.5L11.5 6M1.5 15L6.5 19.5L11.5 15" fill="none" stroke="#2a2a2a" stroke-width="1.6"/></svg>
<div class="t" id="t48" style="left:1706.00px;top:752px;font-size:21.5px;font-weight:400;color:#111;">1</div>
<div class="t" id="t49" style="left:1882.00px;top:752px;font-size:21.5px;font-weight:400;color:#111;">1</div>
<div class="t" id="t50" style="left:1630.30px;top:782px;font-size:21.5px;font-weight:400;color:#262626;letter-spacing:0.150px;">Width</div>
<div class="t" id="t51" style="left:1802.00px;top:782px;font-size:21.5px;font-weight:400;color:#262626;letter-spacing:0.045px;">Height</div>
<div class="a" style="left:1422px;top:836px;width:518px;height:2px;background:#c2c2c2"></div>
<svg style="left:1579px;top:1465px;" width="22" height="26" viewBox="0 0 22 26"><path d="M1.1 1.1H14.5L20.9 7.5V24.9H1.1Z" fill="none" stroke="#4a4a4a" stroke-width="2.2"/><path d="M12.8 3V9.5H18.8" fill="none" stroke="#4a4a4a" stroke-width="1.8"/></svg>
<svg style="left:1639px;top:1465px;" width="22" height="26" viewBox="0 0 22 26"><path d="M8.5 1.3Q3 1.3 3 3V11Q3 12.8 1 13Q3 13.2 3 15V23Q3 24.7 8.5 24.7M13.5 1.3Q19 1.3 19 3V11Q19 12.8 21 13Q19 13.2 19 15V23Q19 24.7 13.5 24.7" fill="none" stroke="#4a4a4a" stroke-width="2"/></svg>
<svg style="left:1697px;top:1465px;" width="26" height="26" viewBox="0 0 26 26"><circle cx="13" cy="13" r="12" fill="none" stroke="#4a4a4a" stroke-width="2"/><rect x="9" y="9" width="8" height="8" fill="none" stroke="#4a4a4a" stroke-width="2.2"/></svg>
<svg style="left:1755px;top:1465px;" width="30" height="26" viewBox="0 0 30 26"><rect x="2" y="2" width="26" height="22" fill="none" stroke="#3b82f0" stroke-width="4"/><path d="M6 7H10M6 11H10M6 15H10M6 19H10M20 7H24M20 11H24M20 15H24M20 19H24" stroke="#3b82f0" stroke-width="2"/></svg>
<div class="a" style="left:1422px;top:1508px;width:518px;height:124px;background:#d1deed"></div>
<div class="a" style="left:1422px;top:1632px;width:518px;height:2px;background:#1d4a9f"></div>
<div class="a" style="left:1436px;top:1522px;width:96px;height:96px;background:#fff"></div>
<svg style="left:1430px;top:1515px;" width="110" height="110" viewBox="0 0 110 110"><g transform="scale(0.05777310924369748)"><g fill="none" stroke="#2b2b2b" stroke-width="30" stroke-linecap="round">
<path d="M530 515Q600 280 680 265Q740 270 790 430Q950 480 1110 440Q1170 250 1250 245Q1320 260 1360 485"/>
<path d="M510 565C380 650 340 850 370 1010C400 1150 500 1240 720 1290"/>
<path d="M1375 545C1520 620 1560 850 1520 990C1480 1130 1380 1230 1180 1290"/>
<path d="M785 740V790M1125 735V790"/>
<path d="M160 1015Q400 950 705 1000M300 1325Q500 1120 765 1080M1140 1010Q1400 900 1700 1015M1220 1050Q1500 1080 1670 1215"/>
<path d="M680 1130Q760 1260 940 1150Q1060 1270 1210 1130M940 1110V1150"/>
<path d="M300 1645Q360 1380 620 1295M1290 1280Q1570 1370 1615 1645"/>
<path d="M1180 1570Q1190 1390 1370 1390Q1540 1400 1545 1560Q1540 1660 1370 1660Q1200 1655 1180 1570M1300 1530Q1250 1600 1290 1650M1440 1520Q1390 1600 1415 1650"/>
</g>
<path d="M600 1285Q950 1400 1290 1280" fill="none" stroke="#f2b48a" stroke-width="26"/>
<g fill="#d9432b"><path d="M575 520Q640 350 680 365Q720 370 755 460Q650 470 575 520Z"/><path d="M1150 465Q1200 340 1240 345Q1290 350 1320 510Q1240 460 1150 465Z"/>
<path d="M790 500L880 500L825 660Z"/><path d="M915 520L1000 520L960 650Z"/><path d="M1020 500L1110 505L1060 660Z"/></g>
<g fill="none" stroke="#e05a45" stroke-width="18"><path d="M400 810Q500 740 630 760M410 900Q500 800 620 770M1265 745Q1400 740 1495 800M1270 760Q1400 790 1470 890"/></g>
<ellipse cx="940" cy="1070" rx="95" ry="50" fill="#d9432b" stroke="#2b2b2b" stroke-width="24"/>
<path d="M800 1360Q790 1530 945 1550Q1100 1540 1095 1360Z" fill="#e8d33c" stroke="#3a3a1a" stroke-width="22"/>
<path d="M925 1390Q950 1450 935 1520" fill="none" stroke="#2b2b2b" stroke-width="20"/></g></svg>
<div class="t" id="t52" style="left:1542.90px;top:1559px;font-size:23px;font-weight:700;color:#222;letter-spacing:-0.242px;">cat</div>
<div class="a" style="left:1928px;top:1966px;width:12px;height:14px;background:#000"></div>
<div class="a" style="left:1922px;top:1960px;width:18px;height:20px;background:#fff;border-bottom-right-radius:10px"></div>
<svg style="left:1437px;top:1939.5px;" width="26" height="26" viewBox="0 0 26 26"><g fill="none" stroke="#6f6f6f" stroke-width="2"><rect x="1" y="1" width="10" height="10"/><rect x="15" y="1" width="10" height="10"/><rect x="1" y="15" width="10" height="10"/><rect x="15" y="15" width="10" height="10"/></g></svg>
<div class="a" style="left:1479px;top:1930.3px;width:451px;height:43.5px;background:#fff;border:2px solid #b4b4b4;border-radius:8px"></div>
<svg style="left:1488px;top:1939px;" width="26" height="26" viewBox="0 0 26 26"><circle cx="13" cy="13" r="12" fill="none" stroke="#6f6f6f" stroke-width="2"/><path d="M7 9.5H19M9.5 13.5H16.5M11.5 17.5H14.5" stroke="#6f6f6f" stroke-width="2"/></svg>
<div class="t" id="t53" style="left:1521.80px;top:1942px;font-size:22px;font-weight:400;color:#bdbdbd;letter-spacing:0.688px;">Filter</div>
</body></html>
